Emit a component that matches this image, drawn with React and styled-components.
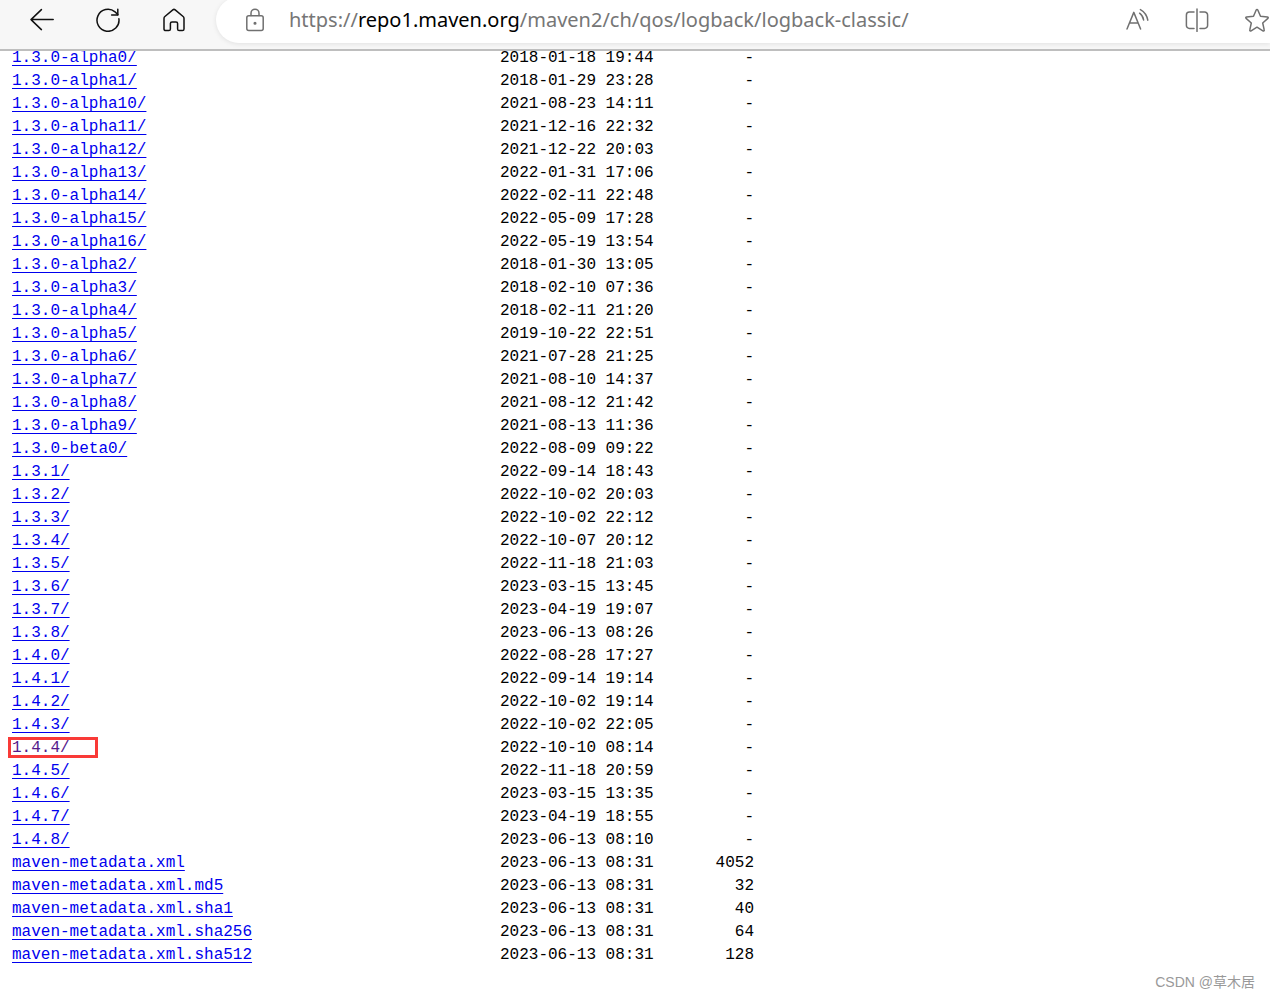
import { useState } from "react"
import styled, { createGlobalStyle } from "styled-components"

const GlobalStyle = createGlobalStyle`
    body {
        margin: 0;
        background-color: #fff;
        color: #000;
    }
`
const Page = styled.div`
    display: flex;
    flex-direction: column;
    min-height: 100vh;
`
const Toolbar = styled.header`
    position: fixed;
    top: 0;
    left: 0;
    right: 0;
    z-index: 1;
    display: flex;
    align-items: flex-end;
    gap: 30px;
    height: 49px;
    padding-left: 30px;
    overflow: hidden;
    background-color: #f7f7f7;
    border-bottom: 2px solid #bebebe;
`
const NavButtons = styled.nav`
    display: flex;
    gap: 42px;
    padding-bottom: 17px;
`
const IconButton = styled.button`
    display: block;
    flex: none;
    padding: 0;
    border: none;
    background: none;
    color: ${props => props.$muted ? "#707070" : "#111"};
    cursor: pointer;
`
const Icon = styled.svg`
    display: block;
    fill: none;
    stroke: currentColor;
    stroke-width: 1.5;
    stroke-linecap: round;
    stroke-linejoin: round;
`
const AddressBar = styled.div`
    flex: 1;
    min-width: 0;
    display: flex;
    align-items: center;
    gap: 25px;
    height: 46px;
    margin-bottom: 6px;
    padding: 0px 1px 0px 30px;
    box-sizing: border-box;
    border-radius: 23px 0px 0px 23px;
    background-color: #fff;
    box-shadow: 0px 1px 5px rgba(0, 0, 0, 0.09);
`
const UrlButton = styled.button`
    flex: 1;
    min-width: 0;
    padding: 0;
    border: none;
    background: none;
    overflow: hidden;
    white-space: nowrap;
    text-align: left;
    font-family: 'Noto Sans', 'Open Sans', sans-serif;
    font-size: 20px;
    line-height: 30px;
    color: #767676;
    cursor: text;
`
const UrlInput = styled.input`
    flex: 1;
    min-width: 0;
    padding: 0;
    border: none;
    outline: none;
    font-family: 'Noto Sans', 'Open Sans', sans-serif;
    font-size: 20px;
    line-height: 30px;
`
const Host = styled.span`
    color: #000;
`
const PageActions = styled.div`
    display: flex;
    gap: 36px;
`
const Listing = styled.main`
    flex: 1;
    padding: 47px 12px 0px 12px;
`
const FileTable = styled.table`
    width: 742px;
    max-width: 100%;
    table-layout: fixed;
    border-collapse: collapse;
    font-family: 'Liberation Mono', monospace;
    font-size: 16px;
    line-height: 23px;
`
const NameCell = styled.td`
    position: relative;
    padding: 0;
    white-space: nowrap;
`
const DateCell = styled.td`
    width: 156px;
    padding: 0;
    white-space: nowrap;
`
const SizeCell = styled.td`
    width: 98px;
    padding: 0;
    text-align: right;
`
const FileLink = styled.a`
    color: ${props => props.$visited ? "#551a8b" : "#0000ee"};
    text-decoration: underline;
    text-underline-offset: 3px;
`
const Marker = styled.span`
    position: absolute;
    top: 0;
    left: -4px;
    width: 90px;
    height: 21px;
    box-sizing: border-box;
    border: 3px solid #f93a37;
    pointer-events: none;
`
const Credit = styled.footer`
    padding-right: 15px;
    text-align: right;
    font-family: 'Liberation Sans', 'Noto Sans CJK SC', sans-serif;
    font-size: 14px;
    line-height: 30px;
    color: #999;
`

const files = [
    ["1.3.0-alpha0/", "2018-01-18 19:44", "-"],
    ["1.3.0-alpha1/", "2018-01-29 23:28", "-"],
    ["1.3.0-alpha10/", "2021-08-23 14:11", "-"],
    ["1.3.0-alpha11/", "2021-12-16 22:32", "-"],
    ["1.3.0-alpha12/", "2021-12-22 20:03", "-"],
    ["1.3.0-alpha13/", "2022-01-31 17:06", "-"],
    ["1.3.0-alpha14/", "2022-02-11 22:48", "-"],
    ["1.3.0-alpha15/", "2022-05-09 17:28", "-"],
    ["1.3.0-alpha16/", "2022-05-19 13:54", "-"],
    ["1.3.0-alpha2/", "2018-01-30 13:05", "-"],
    ["1.3.0-alpha3/", "2018-02-10 07:36", "-"],
    ["1.3.0-alpha4/", "2018-02-11 21:20", "-"],
    ["1.3.0-alpha5/", "2019-10-22 22:51", "-"],
    ["1.3.0-alpha6/", "2021-07-28 21:25", "-"],
    ["1.3.0-alpha7/", "2021-08-10 14:37", "-"],
    ["1.3.0-alpha8/", "2021-08-12 21:42", "-"],
    ["1.3.0-alpha9/", "2021-08-13 11:36", "-"],
    ["1.3.0-beta0/", "2022-08-09 09:22", "-"],
    ["1.3.1/", "2022-09-14 18:43", "-"],
    ["1.3.2/", "2022-10-02 20:03", "-"],
    ["1.3.3/", "2022-10-02 22:12", "-"],
    ["1.3.4/", "2022-10-07 20:12", "-"],
    ["1.3.5/", "2022-11-18 21:03", "-"],
    ["1.3.6/", "2023-03-15 13:45", "-"],
    ["1.3.7/", "2023-04-19 19:07", "-"],
    ["1.3.8/", "2023-06-13 08:26", "-"],
    ["1.4.0/", "2022-08-28 17:27", "-"],
    ["1.4.1/", "2022-09-14 19:14", "-"],
    ["1.4.2/", "2022-10-02 19:14", "-"],
    ["1.4.3/", "2022-10-02 22:05", "-"],
    ["1.4.4/", "2022-10-10 08:14", "-"],
    ["1.4.5/", "2022-11-18 20:59", "-"],
    ["1.4.6/", "2023-03-15 13:35", "-"],
    ["1.4.7/", "2023-04-19 18:55", "-"],
    ["1.4.8/", "2023-06-13 08:10", "-"],
    ["maven-metadata.xml", "2023-06-13 08:31", "4052"],
    ["maven-metadata.xml.md5", "2023-06-13 08:31", "32"],
    ["maven-metadata.xml.sha1", "2023-06-13 08:31", "40"],
    ["maven-metadata.xml.sha256", "2023-06-13 08:31", "64"],
    ["maven-metadata.xml.sha512", "2023-06-13 08:31", "128"],
]

const markedFile = "1.4.4/"

const Address = () => {

    const [editing, setEditing] = useState(false)
    const [url, setUrl] = useState("https://repo1.maven.org/maven2/ch/qos/logback/logback-classic/")

    // only the host is dark while the address is not being edited
    const [, scheme, host, path] = url.match(/^(\w+:\/\/)?([^/]*)(.*)$/)

    if (editing) {
        return <UrlInput
            type="text"
            aria-label="Address"
            autoFocus
            value={url}
            onChange={(evt) => setUrl(evt.target.value)}
            onBlur={() => setEditing(false)}
        />
    }

    return (
        <UrlButton type="button" onClick={() => setEditing(true)}>
            {scheme}<Host>{host}</Host>{path}
        </UrlButton>
    )
}

const BrowserBar = () => (
    <Toolbar>
        <NavButtons>
            <IconButton type="button" aria-label="Back">
                <Icon width="24" height="24" viewBox="0 0 24 24">
                    <path d="M23.2 11.6H1M11.4 1.6L1 11.6l10.4 10" />
                </Icon>
            </IconButton>
            <IconButton type="button" aria-label="Refresh">
                <Icon width="24" height="24" viewBox="0 0 24 24">
                    <path d="M22.9 10.8A11 11 0 1 1 19 3.8L21.8 6.6" />
                    <path d="M21.8 1.2V6.9H15.6" />
                </Icon>
            </IconButton>
            <IconButton type="button" aria-label="Home">
                <Icon width="24" height="24" viewBox="0 0 24 24">
                    <path d="M2 10.4c0-.8.3-1.4.9-1.9L10.8 1.9c.7-.6 1.7-.6 2.4 0l7.9 6.6c.6.5.9 1.1.9 1.9V21c0 .9-.7 1.6-1.6 1.6h-3.2c-.9 0-1.6-.7-1.6-1.6v-5.4c0-.9-.7-1.6-1.6-1.6h-4c-.9 0-1.6.7-1.6 1.6V21c0 .9-.7 1.6-1.6 1.6H3.6C2.7 22.6 2 21.9 2 21z" />
                </Icon>
            </IconButton>
        </NavButtons>
        <AddressBar>
            <IconButton type="button" aria-label="Site information" $muted>
                <Icon width="18" height="24" viewBox="0 0 18 24">
                    <rect x="0.8" y="7.8" width="16.4" height="14.8" rx="2" />
                    <path d="M5 7.5V5.2a4 4 0 0 1 8 0v2.3" />
                    <circle cx="9" cy="15.2" r="0.8" fill="currentColor" />
                </Icon>
            </IconButton>
            <Address />
            <PageActions>
                <IconButton type="button" aria-label="Read aloud" $muted>
                    <Icon width="24" height="24" viewBox="0 0 24 24">
                        <path d="M2 21L8.800 4.400l6.800 16.600M4.400 15h8.600" />
                        <path d="M14.600 5.200c2.200 1.600 3.600 4 4 6.800M15.400 1.600c4 2.200 6.600 6 7.400 10.600" />
                    </Icon>
                </IconButton>
                <IconButton type="button" aria-label="Split screen" $muted>
                    <Icon width="24" height="24" viewBox="0 0 24 24">
                        <path d="M9 4H4.4A3 3 0 0 0 1.4 7v10.4a3 3 0 0 0 3 3H9M15 4h4.6a3 3 0 0 1 3 3v10.4a3 3 0 0 1-3 3H15M12 1v22.4" />
                    </Icon>
                </IconButton>
                <IconButton type="button" aria-label="Add to favorites" $muted>
                    <Icon width="24" height="24" viewBox="0 0 24 24">
                        <path d="M11.2 2c.3-.7 1.3-.7 1.6 0l2.7 6.2 6.9.7c.8.1 1.1 1 .5 1.500l-5.200 4.600 1.500 6.900c.2.800-.6 1.300-1.300.9L12 19.200l-5.900 3.600c-.7.4-1.500-.1-1.300-.9l1.500-6.900-5.200-4.600c-.6-.5-.3-1.400.5-1.500l6.900-.7z" />
                    </Icon>
                </IconButton>
            </PageActions>
        </AddressBar>
    </Toolbar>
)

const App = () => (
    <Page>
        <GlobalStyle />
        <BrowserBar />
        <Listing>
            <FileTable>
                <tbody>
                    {files.map(([name, date, size]) => (
                        <tr key={name}>
                            <NameCell>
                                <FileLink href={"#" + name} $visited={name === markedFile}>{name}</FileLink>
                                {name === markedFile && <Marker />}
                            </NameCell>
                            <DateCell>{date}</DateCell>
                            <SizeCell>{size}</SizeCell>
                        </tr>
                    ))}
                </tbody>
            </FileTable>
        </Listing>
        <Credit>CSDN @草木居</Credit>
    </Page>
)

export default App
